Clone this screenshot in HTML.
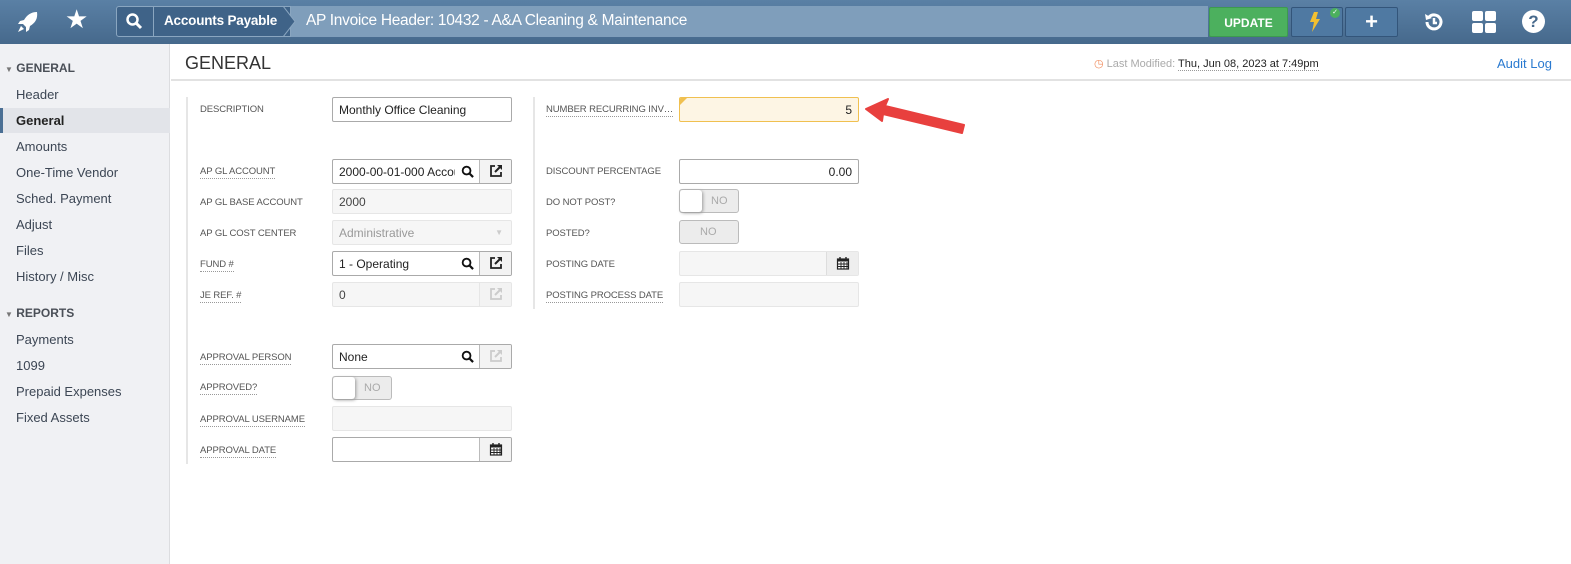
<!DOCTYPE html>
<html><head><style>
*{box-sizing:border-box;margin:0;padding:0}
body{width:1571px;height:564px;position:relative;background:#fff;font-family:"Liberation Sans",sans-serif;overflow:hidden}
.a{position:absolute}
.top{left:0;top:0;width:1571px;height:44px;background:linear-gradient(#5a80a5,#46698c)}
.side{left:0;top:44px;width:170px;height:520px;background:#f0f1f4;border-right:1px solid #dcdde0}
.si{position:absolute;left:16px;font-size:13px;color:#3c4654}
.sh{position:absolute;left:5px;font-size:12px;font-weight:bold;color:#4a4f57}
.lbl{position:absolute;font-size:9.5px;color:#555;letter-spacing:-0.1px}
.u{border-bottom:1px dotted #999;padding-bottom:1px}
.inp{position:absolute;height:25px;border:1px solid #aaa;border-radius:2px;background:#fff;font-size:12px;padding:5px 6px;color:#222;white-space:nowrap;overflow:hidden}
.dis{background:#f6f6f6;border-color:#e6e6e6;color:#444}
.btn{position:absolute;top:0;right:0;width:32px;height:23px;border-left:1px solid #bbb;background:#f3f3f3;text-align:center;padding-top:4px}
.btn svg,.srch svg{display:block;margin:0 auto}
.srch{position:absolute;top:0;right:32px;width:24px;height:23px;background:#fff;padding-top:5px}
.tg{position:absolute;width:60px;height:24px;border:1px solid #bbb;border-radius:3px;background:#ececec;font-size:11px;color:#aaa}
.tg .k{position:absolute;left:0;top:0;width:22px;height:22px;background:#fff;border-radius:3px;box-shadow:1px 1px 3px #999}
.tg span{position:absolute;left:31px;top:5px}
</style></head><body>
<svg width="0" height="0" style="position:absolute"><defs>
<symbol id="mg" viewBox="0 0 14 14"><circle cx="6" cy="6" r="4.2" stroke="#111" stroke-width="2" fill="none"/><path d="M9 9l4 4" stroke="#111" stroke-width="2.4"/></symbol>
<symbol id="ext" viewBox="0 0 14 14"><path d="M6 2H2v10h10V8" stroke="currentColor" stroke-width="1.8" fill="none"/><path d="M8 1h5v5z" fill="currentColor"/><path d="M12 2L6 8" stroke="currentColor" stroke-width="2"/></symbol>
<symbol id="cal" viewBox="0 0 14 14"><rect x="1.5" y="3" width="11" height="10" fill="#fff" stroke="#222" stroke-width="1.2"/><rect x="1.5" y="3" width="11" height="2.5" fill="#222"/><path d="M5 6v7M8 6v7M11 6v7M2 8h10M2 10.5h10" stroke="#222" stroke-width=".9"/><path d="M4 1v3M10 1v3" stroke="#222" stroke-width="1.4"/></symbol>
</defs></svg>
<div class="a top"></div>
<svg class="a" style="left:16px;top:10px" width="24" height="24" viewBox="0 0 24 24"><path d="M21 2c-6 0-10 3-13 8l-4 1-2 3 5 0 3 3 0 5 3-2 1-4c5-3 8-7 7-14zM16 6a2 2 0 1 0 .1 0z" fill="#fff"/><path d="M5 16l-3 6 6-3z" fill="#fff"/></svg>
<div class="a" style="left:65px;top:4px;color:#fff;font-size:26px">★</div>
<div class="a" style="left:116px;top:6px;width:175px;height:31px;border:1px solid #8aa6c0;border-radius:3px 0 0 3px;background:#3f6388"></div>
<svg class="a" style="left:125px;top:12px" width="18" height="18" viewBox="0 0 18 18"><circle cx="7.5" cy="7.5" r="5" stroke="#fff" stroke-width="2.5" fill="none"/><path d="M11 11l5 5" stroke="#fff" stroke-width="3"/></svg>
<div class="a" style="left:153px;top:6px;width:1px;height:31px;background:#8aa6c0"></div>
<div class="a" style="left:164px;top:13px;color:#fff;font-size:13.5px;font-weight:bold;letter-spacing:-0.2px">Accounts Payable</div>
<div class="a" style="left:291px;top:6px;width:917px;height:31px;background:#7f9ebb"></div>
<svg class="a" style="left:283px;top:6px" width="16" height="31"><path d="M0 0L12 15.5 0 31z" fill="#3f6388"/><path d="M0 0L12 15.5 0 31" stroke="#8aa6c0" fill="none"/></svg>
<div class="a" style="left:306px;top:12px;color:#fff;font-size:15.5px;letter-spacing:-0.3px">AP Invoice Header: 10432 - A&amp;A Cleaning &amp; Maintenance</div>
<div class="a" style="left:1209px;top:7px;width:79px;height:30px;background:#4cb05e;border:1px solid #3d9a4f;border-radius:2px;color:#fff;font-size:12px;font-weight:bold;text-align:center;padding-top:8px">UPDATE</div>
<div class="a" style="left:1291px;top:7px;width:52px;height:30px;background:#4f79a2;border:1px solid #33557a;border-radius:2px"></div>
<svg class="a" style="left:1309px;top:12px" width="12" height="20"><path d="M5 0L1 10h4L3 20 11 7H7L9 0z" fill="#f3c030"/></svg>
<div class="a" style="left:1330px;top:8px;width:10px;height:10px;border-radius:50%;background:#4cb05e;color:#fff;font-size:7px;text-align:center;line-height:10px">✓</div>
<div class="a" style="left:1345px;top:7px;width:53px;height:30px;background:#4f79a2;border:1px solid #33557a;border-radius:2px;color:#fff;font-size:22px;font-weight:bold;text-align:center;line-height:27px">+</div>
<svg class="a" style="left:1423px;top:11px" width="22" height="22" viewBox="0 0 22 22"><path d="M4 11a7 7 0 1 0 2-5" stroke="#fff" stroke-width="3" fill="none"/><path d="M2 3l1 6 6-2z" fill="#fff"/><path d="M11 7v5h3" stroke="#fff" stroke-width="2.5" fill="none"/></svg>
<svg class="a" style="left:1472px;top:11px" width="24" height="22"><rect x="0" y="0" width="11" height="10" rx="2" fill="#fff"/><rect x="13" y="0" width="11" height="10" rx="2" fill="#fff"/><rect x="0" y="12" width="11" height="10" rx="2" fill="#fff"/><rect x="13" y="12" width="11" height="10" rx="2" fill="#fff"/></svg>
<div class="a" style="left:1522px;top:10px;width:23px;height:23px;border-radius:50%;background:#fff;color:#46698c;font-size:17px;font-weight:bold;text-align:center;line-height:23px">?</div>

<div class="a side"></div>
<div class="sh" style="top:61px"><span style="font-size:8px;color:#777">▼</span> GENERAL</div>
<div class="a" style="left:0;top:108px;width:170px;height:25px;background:#e2e4e9;border-left:3px solid #4a6f94"></div>
<div class="si" style="top:87px">Header</div>
<div class="si" style="top:113px;color:#222;font-weight:bold">General</div>
<div class="si" style="top:139px">Amounts</div>
<div class="si" style="top:165px">One-Time Vendor</div>
<div class="si" style="top:191px">Sched. Payment</div>
<div class="si" style="top:217px">Adjust</div>
<div class="si" style="top:243px">Files</div>
<div class="si" style="top:269px">History / Misc</div>
<div class="sh" style="top:306px"><span style="font-size:8px;color:#777">▼</span> REPORTS</div>
<div class="si" style="top:332px">Payments</div>
<div class="si" style="top:358px">1099</div>
<div class="si" style="top:384px">Prepaid Expenses</div>
<div class="si" style="top:410px">Fixed Assets</div>

<div class="a" style="left:185px;top:53px;font-size:18px;color:#333">GENERAL</div>
<div class="a" style="left:171px;top:79px;width:1400px;height:2px;background:#e2e2e2"></div>
<div class="a" style="left:1094px;top:57px;font-size:11px;color:#aaa"><span style="color:#f08a5a">◷</span> Last Modified: <span style="color:#222;border-bottom:1px dotted #999">Thu, Jun 08, 2023 at 7:49pm</span></div>
<div class="a" style="left:1497px;top:56px;font-size:13px;color:#2a7ad0">Audit Log</div>

<div class="a" style="left:186px;top:97px;width:2px;height:367px;background:#e6e6e6"></div>
<div class="a" style="left:533px;top:97px;width:2px;height:212px;background:#e6e6e6"></div>

<div class="lbl" style="left:200px;top:104px">DESCRIPTION</div>
<div class="inp" style="left:332px;top:97px;width:180px">Monthly Office Cleaning</div>
<div class="lbl u" style="left:200px;top:166px">AP GL ACCOUNT</div>
<div class="inp" style="left:332px;top:159px;width:180px">2000-00-01-000 Accou<div class="srch"><svg width="13" height="13"><use href="#mg"/></svg></div><div class="btn" style="color:#222"><svg width="14" height="14"><use href="#ext"/></svg></div></div>
<div class="lbl" style="left:200px;top:197px">AP GL BASE ACCOUNT</div>
<div class="inp dis" style="left:332px;top:189px;width:180px">2000</div>
<div class="lbl" style="left:200px;top:228px">AP GL COST CENTER</div>
<div class="inp dis" style="left:332px;top:220px;width:180px;color:#999">Administrative<span style="position:absolute;right:8px;top:7px;font-size:8px;color:#ccc">▼</span></div>
<div class="lbl u" style="left:200px;top:259px">FUND #</div>
<div class="inp" style="left:332px;top:251px;width:180px">1 - Operating<div class="srch"><svg width="13" height="13"><use href="#mg"/></svg></div><div class="btn" style="color:#222"><svg width="14" height="14"><use href="#ext"/></svg></div></div>
<div class="lbl u" style="left:200px;top:290px">JE REF. #</div>
<div class="inp dis" style="left:332px;top:282px;width:180px">0<div class="btn" style="color:#ccc;border-color:#e6e6e6;background:#f3f3f3"><svg width="14" height="14"><use href="#ext"/></svg></div></div>

<div class="lbl u" style="left:200px;top:352px">APPROVAL PERSON</div>
<div class="inp" style="left:332px;top:344px;width:180px">None<div class="srch"><svg width="13" height="13"><use href="#mg"/></svg></div><div class="btn" style="color:#ccc"><svg width="14" height="14"><use href="#ext"/></svg></div></div>
<div class="lbl u" style="left:200px;top:382px">APPROVED?</div>
<div class="tg" style="left:332px;top:376px"><div class="k"></div><span>NO</span></div>
<div class="lbl u" style="left:200px;top:414px">APPROVAL USERNAME</div>
<div class="inp dis" style="left:332px;top:406px;width:180px"></div>
<div class="lbl u" style="left:200px;top:445px">APPROVAL DATE</div>
<div class="inp" style="left:332px;top:437px;width:180px"><div class="btn"><svg width="14" height="14"><use href="#cal"/></svg></div></div>

<div class="lbl u" style="left:546px;top:104px">NUMBER RECURRING INV…</div>
<div class="inp" style="left:679px;top:97px;width:180px;background:#fdf5e4;border-color:#f0c050;text-align:right">5<div style="position:absolute;left:0;top:0;border-top:7px solid #f0c050;border-right:7px solid transparent"></div></div>
<div class="lbl" style="left:546px;top:166px">DISCOUNT PERCENTAGE</div>
<div class="inp" style="left:679px;top:159px;width:180px;text-align:right">0.00</div>
<div class="lbl" style="left:546px;top:197px">DO NOT POST?</div>
<div class="tg" style="left:679px;top:189px"><div class="k"></div><span>NO</span></div>
<div class="lbl" style="left:546px;top:228px">POSTED?</div>
<div class="tg" style="left:679px;top:220px"><span style="left:20px">NO</span></div>
<div class="lbl" style="left:546px;top:259px">POSTING DATE</div>
<div class="inp dis" style="left:679px;top:251px;width:180px"><div class="btn" style="border-color:#ddd;background:#eee"><svg width="14" height="14"><use href="#cal"/></svg></div></div>
<div class="lbl u" style="left:546px;top:290px">POSTING PROCESS DATE</div>
<div class="inp dis" style="left:679px;top:282px;width:180px"></div>

<svg class="a" style="left:860px;top:95px" width="110" height="45"><path d="M6 14L28 4 25 11 104 30 102 38 23 19 22 26z" fill="#e8403e" stroke="#e8403e" stroke-width="2" stroke-linejoin="round"/></svg>
</body></html>
